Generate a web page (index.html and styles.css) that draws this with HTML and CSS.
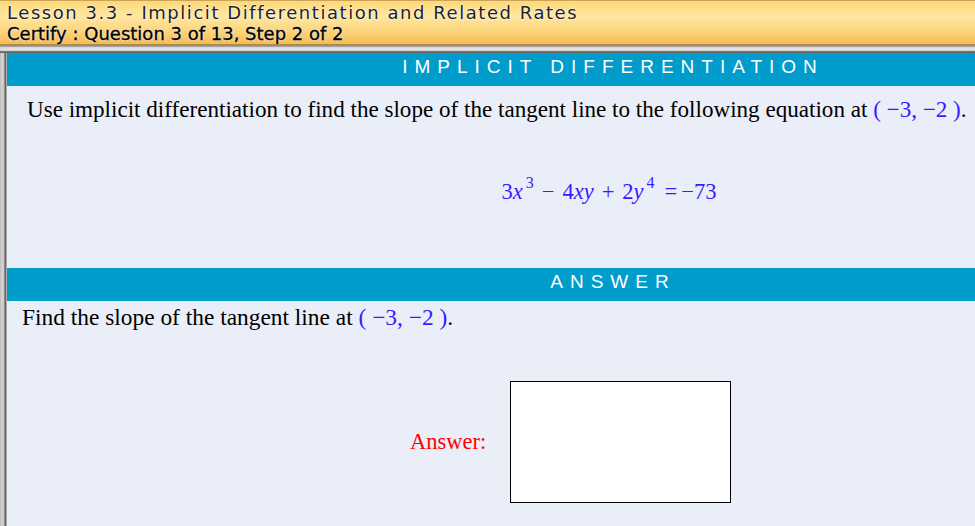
FILE: index.html
```html
<!DOCTYPE html>
<html>
<head>
<meta charset="utf-8">
<link rel="stylesheet" href="styles.css">
</head>
<body>
<div class="header">
  <div class="title">Lesson 3.3 - Implicit Differentiation and Related Rates</div>
  <div class="subtitle">Certify : Question 3 of 13, Step 2 of 2</div>
</div>
<div class="frame">
  <div class="panel">
    <div class="bar">IMPLICIT DIFFERENTIATION</div>
    <div class="question">
      <p class="prompt">Use implicit differentiation to find the slope of the tangent line to the following equation at <span class="math">( &minus;3, &minus;2 )</span>.</p>
      <p class="equation math">3<i>x</i><sup>3</sup><span class="op">&minus;</span>4<i>xy</i><span class="op">+</span>2<i>y</i><sup>4</sup><span class="op eq">=</span>&minus;73</p>
    </div>
    <div class="bar">ANSWER</div>
    <div class="answer">
      <p class="prompt2">Find the slope of the tangent line at <span class="math">( &minus;3, &minus;2 )</span>.</p>
      <div class="answer-row">
        <span class="answer-label">Answer:</span>
        <div class="answer-box"></div>
      </div>
    </div>
  </div>
</div>
</body>
</html>
```

FILE: styles.css
```css
html, body {
  margin: 0;
  padding: 0;
  width: 975px;
  height: 526px;
  overflow: hidden;
  background: #eaeef8;
}

.header {
  height: 42px;
  padding: 1px 0 0 7px;
  border-top: 1px solid #caa45a;
  border-bottom: 2px solid #b38a45;
  background: linear-gradient(to bottom, #fdd877 0%, #ffe7a2 35%, #fcd57c 70%, #f6bb55 100%);
  font-family: "DejaVu Sans", Verdana, sans-serif;
  font-size: 18px;
  line-height: 21px;
  color: #111;
  text-shadow: 0 0 2px #fff, 0 0 1px #fff;
}

.title {
  color: #222;
  letter-spacing: 1.55px;
}

.subtitle {
  color: #000;
  -webkit-text-stroke: 0.35px #000;
}

.frame {
  padding-top: 7px;
  padding-left: 7px;
  background:
    linear-gradient(to bottom, #8a8a8a 0, #f4f4f4 2px, #c9c9c9 3px, #ffffff 4px, #9c9c9c 5px, #5a5a5a 6px, #6e6e6e 7px) top / 100% 7px no-repeat,
    linear-gradient(to right, #b8b8b8 0, #d6d6d6 2px, #c4c4c4 4px, #5c5c5c 5px, #6e6e6e 6px, #e8e8e8 7px) left / 7px 100% repeat-y;
  height: 473px;
}

.panel {
  background: #eaeef8;
  height: 100%;
}

.bar {
  background: #009ccb;
  color: #fff;
  font-family: "Liberation Sans", Arial, sans-serif;
  font-size: 19px;
  letter-spacing: 7px;
  text-align: center;
  padding-left: 244px;
  height: 33px;
  line-height: 28px;
}

.math {
  color: #3a1aff;
}

.question {
  height: 182px;
  font-family: "Liberation Serif", "Times New Roman", serif;
  color: #000;
}

.prompt {
  margin: 0;
  padding: 9px 0 0 20px;
  font-size: 23.1px;
  line-height: 28px;
}

.equation {
  margin: 0;
  padding: 55px 0 0 236px;
  text-align: center;
  font-size: 22.5px;
  line-height: 28px;
}

.equation sup {
  font-size: 16px;
  vertical-align: 11px;
  line-height: 0;
  margin-left: 3px;
}

.op {
  margin: 0 8px;
}

.op.eq {
  margin: 0 4px 0 10px;
}

.answer {
  font-family: "Liberation Serif", "Times New Roman", serif;
}

.prompt2 {
  margin: 0;
  padding: 2px 0 0 15px;
  font-size: 23.4px;
  line-height: 28px;
  color: #000;
}

.answer-row {
  display: flex;
  align-items: center;
  margin-top: 50px;
  padding-left: 403px;
}

.answer-label {
  color: #ff0000;
  font-size: 22.5px;
  width: 100px;
}

.answer-box {
  width: 219px;
  height: 120px;
  background: #fff;
  border: 1px solid #000;
}
```
